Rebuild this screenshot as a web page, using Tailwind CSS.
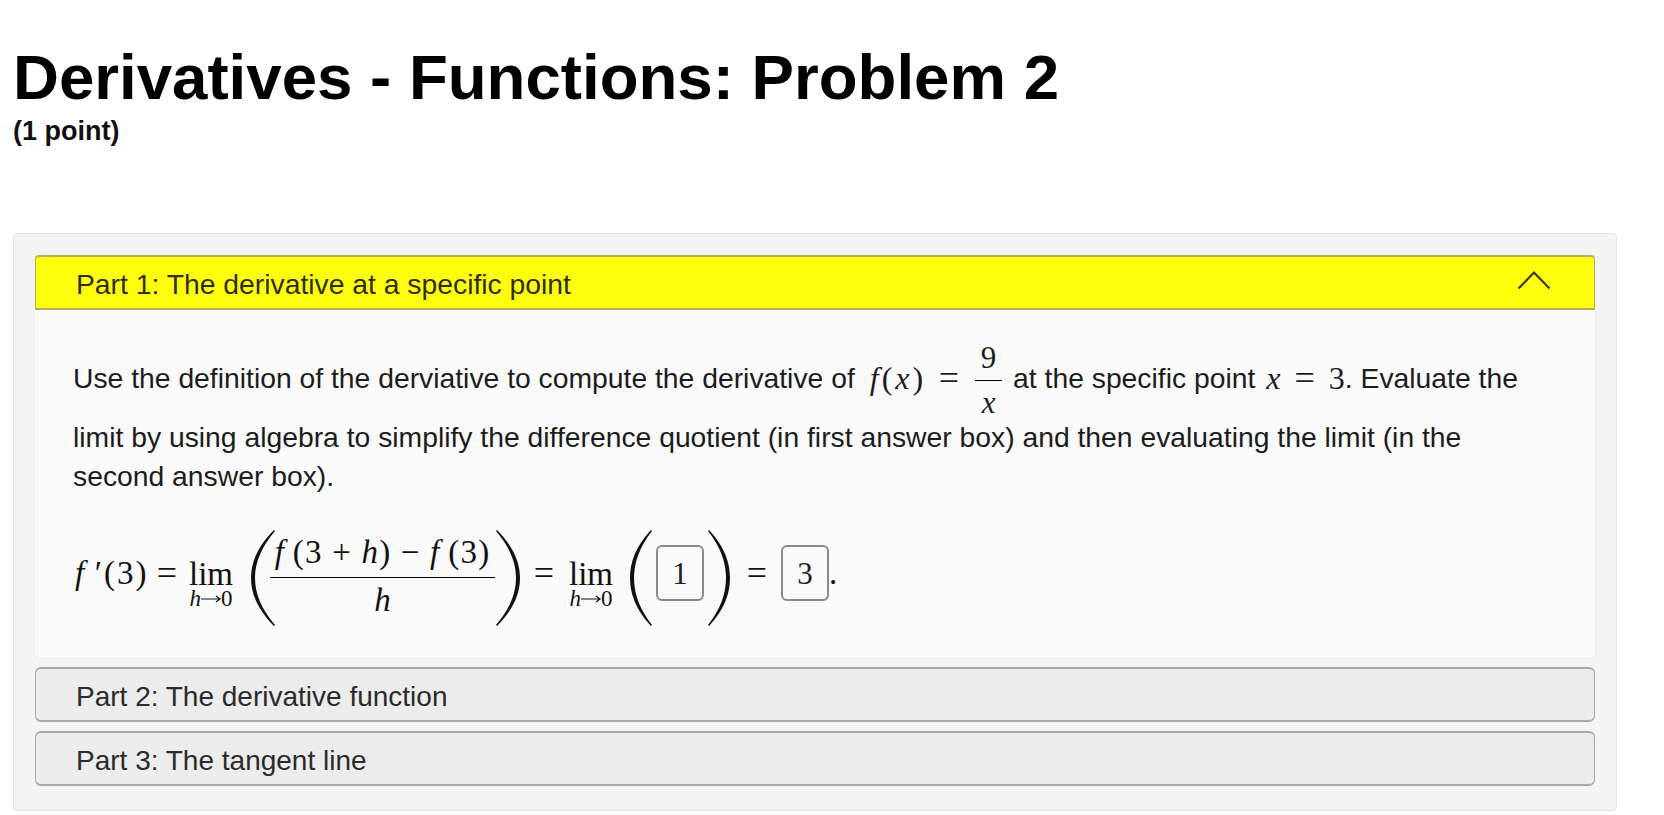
<!DOCTYPE html>
<html lang="en">
<head>
  <meta charset="UTF-8" />
  <title>Derivatives - Functions: Problem 2</title>
  <script src="https://cdn.jsdelivr.net/npm/@tailwindcss/browser@4"></script>
</head>
<body class="bg-white text-[#111] font-['Liberation_Sans',sans-serif] overflow-hidden">

  <div class="w-[1664px] h-[815px] pl-[13px] pt-[39px]">
    <h1 class="text-[63.6px] leading-[76px] font-bold text-black">Derivatives - Functions: Problem 2</h1>
    <p class="text-[27px] leading-[32px] font-bold text-[#111]">(1 point)</p>

    <!-- accordion card -->
    <div class="w-[1604px] h-[578px] mt-[86px] px-[20px] pt-[21px] bg-[#f4f4f4] border border-[#e4e4e4] rounded">

      <div class="h-[55px] mx-[1px] pl-[40px] pr-[40px] pt-[4px] flex items-center justify-between bg-[#ffff0d] border-y-2 border-x border-[#b5ae5c] rounded-t-[4px] text-[28.3px] text-[#2f2f1a]">
        <span>Part 1: The derivative at a specific point</span>
        <svg class="w-[34px] h-[20px] mr-[3px] mb-[10px]" viewBox="0 0 34 20" fill="none" stroke="#3a3a20" stroke-width="2.2">
          <path d="M1.5 18.5 L17 2.5 L32.5 18.5" />
        </svg>
      </div>

      <div class="h-[349px] pl-[38px] pr-[40px] pt-[26px] bg-[#fafafa] border border-t-0 border-[#ebebeb] rounded-b-[6px] text-[28.3px] leading-[39px] text-[#1c1c1c]">
        <div class="flex items-center h-[88px] whitespace-nowrap">
          <span class="mb-[4px]">Use the definition of the derviative to compute the derivative of</span>
          <span class="ml-[15px] mb-[4px] w-[57px] font-['Liberation_Serif',serif] text-[32px] tracking-[3px]"><i>f</i>(<i>x</i>)</span>
          <span class="ml-[12px] mb-[4px] font-['Liberation_Serif',serif] text-[36px]">=</span>
          <span class="ml-[16px] w-[27px] flex flex-col items-center font-['Liberation_Serif',serif] text-[31px] leading-[44px]">
            <span>9</span>
            <span class="w-full h-px bg-black"></span>
            <i>x</i>
          </span>
          <span class="ml-[11px] mb-[4px]">at the specific point</span>
          <span class="ml-[11px] mb-[4px] font-['Liberation_Serif',serif] text-[32px]"><i>x</i></span>
          <span class="ml-[14px] mb-[4px] font-['Liberation_Serif',serif] text-[36px]">=</span>
          <span class="ml-[14px] mb-[4px] font-['Liberation_Serif',serif] text-[32px]">3</span>
          <span class="mb-[4px]">. Evaluate the</span>
        </div>
        <p class="w-[1440px] mt-[-6px]">limit by using algebra to simplify the difference quotient (in first answer box) and then evaluating the limit (in the second answer box).</p>

        <!-- display equation -->
        <div class="flex items-center h-[100px] ml-[2px] mt-[27px] font-['Liberation_Serif',serif] text-[33px] leading-none text-[#111] whitespace-nowrap">
          <span class="w-[70px] tracking-[2px]"><i>f</i>&#8201;′(3)</span>
          <span class="w-[44px] text-center text-[36px]">=</span>
          <span class="w-[44px] flex flex-col items-center mt-[25px]">
            <span class="leading-[27px]">lim</span>
            <span class="flex items-center text-[23px] leading-[22px]"><i>h</i>
              <svg class="w-[20px] h-[10px]" viewBox="0 0 20 10" fill="none" stroke="#111" stroke-width="1.2"><path d="M0 5 H19 M15 2 L19 5 L15 8" /></svg>0</span>
          </span>
          <svg class="w-[28px] h-[96px] ml-[15px] mt-[10px]" viewBox="0 0 28 96" fill="#111"><path d="M26 0 C10 16 3 32 3 48 C3 64 10 80 26 96 L27 95 C14 80 7 64 7 48 C7 32 14 16 27 1 Z" /></svg>
          <span class="w-[225px] ml-[-6px] mt-[6px] flex flex-col items-center">
            <span class="h-[48px] leading-[46px] tracking-[1.2px]"><i>f</i>&#8201;(3 + <i>h</i>) − <i>f</i>&#8201;(3)</span>
            <span class="w-full h-px bg-black"></span>
            <i class="h-[46px] leading-[44px]">h</i>
          </span>
          <svg class="w-[28px] h-[96px] mt-[10px]" viewBox="0 0 28 96" fill="#111"><path d="M2 0 C18 16 25 32 25 48 C25 64 18 80 2 96 L1 95 C14 80 21 64 21 48 C21 32 14 16 1 1 Z" /></svg>
          <span class="w-[36px] ml-[3px] text-center text-[36px]">=</span>
          <span class="w-[44px] ml-[7px] flex flex-col items-center mt-[25px]">
            <span class="leading-[27px]">lim</span>
            <span class="flex items-center text-[23px] leading-[22px]"><i>h</i>
              <svg class="w-[20px] h-[10px]" viewBox="0 0 20 10" fill="none" stroke="#111" stroke-width="1.2"><path d="M0 5 H19 M15 2 L19 5 L15 8" /></svg>0</span>
          </span>
          <svg class="w-[26px] h-[96px] ml-[14px] mt-[10px]" viewBox="0 0 26 96" fill="#111"><path d="M24 0 C9 16 3 32 3 48 C3 64 9 80 24 96 L25 95 C13 80 7 64 7 48 C7 32 13 16 25 1 Z" /></svg>
          <span class="w-[48px] h-[56px] ml-[3px] flex items-center justify-center border-2 border-[#8a8a8a] rounded-[6px] text-[#222] text-[31px]">1</span>
          <svg class="w-[26px] h-[96px] ml-[3px] mt-[10px]" viewBox="0 0 26 96" fill="#111"><path d="M2 0 C17 16 23 32 23 48 C23 64 17 80 2 96 L1 95 C13 80 19 64 19 48 C19 32 13 16 1 1 Z" /></svg>
          <span class="w-[48px] text-center text-[36px]">=</span>
          <span class="w-[48px] h-[56px] flex items-center justify-center border-2 border-[#8a8a8a] rounded-[6px] text-[#222] text-[31px]">3</span>
          <span>.</span>
        </div>
      </div>

      <div class="h-[55px] mt-[8px] mx-[1px] px-[40px] pt-[4px] flex items-center bg-[#ececec] border-y-2 border-x border-[#a9a9a9] rounded-[6px] text-[28px] text-[#2b2b2b]">Part 2: The derivative function</div>
      <div class="h-[55px] mt-[9px] mx-[1px] px-[40px] pt-[4px] flex items-center bg-[#ececec] border-y-2 border-x border-[#a9a9a9] rounded-[6px] text-[28px] text-[#2b2b2b]">Part 3: The tangent line</div>
    </div>
  </div>

</body>
</html>
